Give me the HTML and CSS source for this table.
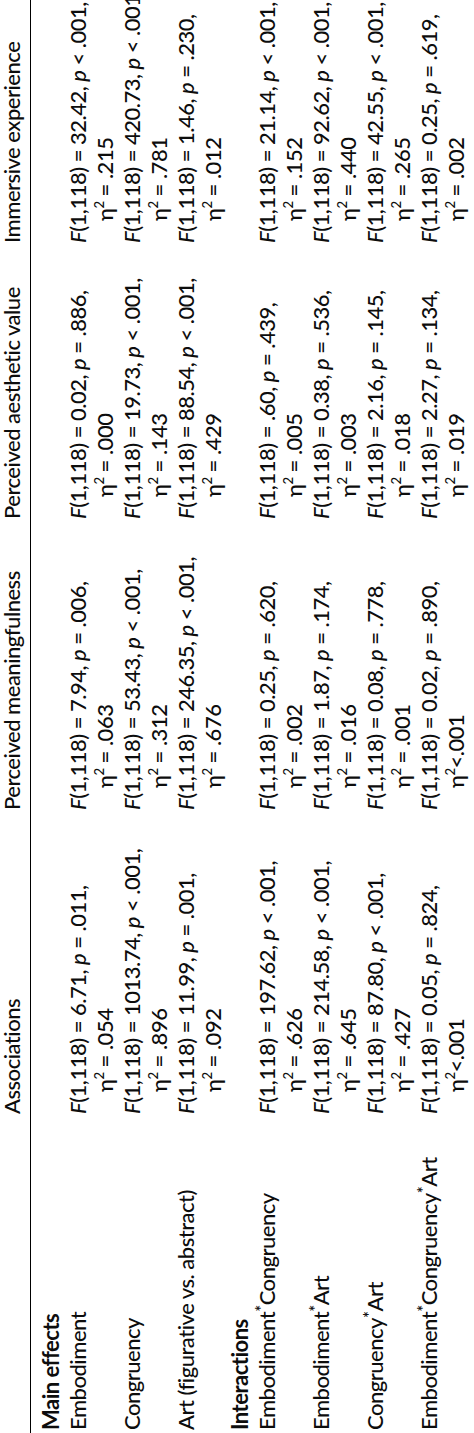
FILE: index.html
```html
<!DOCTYPE html>
<html lang="en">
<head>
<meta charset="utf-8">
<title>Table</title>
<link rel="stylesheet" href="styles.css">
</head>
<body>
<div class="page">
  <div class="table">
    <div class="th"></div>
    <div class="th">Associations</div>
    <div class="th">Perceived meaningfulness</div>
    <div class="th">Perceived aesthetic value</div>
    <div class="th">Immersive experience</div>

    <div class="section">Main effects</div>

    <div class="label">Embodiment</div>
    <div class="cell"><span class="l1"><i>F</i>(1,118) = 6.71, <i>p</i> = .011,</span><span class="l2">η<sup>2</sup> = .054</span></div>
    <div class="cell"><span class="l1"><i>F</i>(1,118) = 7.94, <i>p</i> = .006,</span><span class="l2">η<sup>2</sup> = .063</span></div>
    <div class="cell"><span class="l1"><i>F</i>(1,118) = 0.02, <i>p</i> = .886,</span><span class="l2">η<sup>2</sup> = .000</span></div>
    <div class="cell"><span class="l1"><i>F</i>(1,118) = 32.42, <i>p</i> &lt; .001,</span><span class="l2">η<sup>2</sup> = .215</span></div>

    <div class="label">Congruency</div>
    <div class="cell"><span class="l1"><i>F</i>(1,118) = 1013.74, <i>p</i> &lt; .001,</span><span class="l2">η<sup>2</sup> = .896</span></div>
    <div class="cell"><span class="l1"><i>F</i>(1,118) = 53.43, <i>p</i> &lt; .001,</span><span class="l2">η<sup>2</sup> = .312</span></div>
    <div class="cell"><span class="l1"><i>F</i>(1,118) = 19.73, <i>p</i> &lt; .001,</span><span class="l2">η<sup>2</sup> = .143</span></div>
    <div class="cell"><span class="l1"><i>F</i>(1,118) = 420.73, <i>p</i> &lt; .001,</span><span class="l2">η<sup>2</sup> = .781</span></div>

    <div class="label">Art (figurative vs. abstract)</div>
    <div class="cell"><span class="l1"><i>F</i>(1,118) = 11.99, <i>p</i> = .001,</span><span class="l2">η<sup>2</sup> = .092</span></div>
    <div class="cell"><span class="l1"><i>F</i>(1,118) = 246.35, <i>p</i> &lt; .001,</span><span class="l2">η<sup>2</sup> = .676</span></div>
    <div class="cell"><span class="l1"><i>F</i>(1,118) = 88.54, <i>p</i> &lt; .001,</span><span class="l2">η<sup>2</sup> = .429</span></div>
    <div class="cell"><span class="l1"><i>F</i>(1,118) = 1.46, <i>p</i> = .230,</span><span class="l2">η<sup>2</sup> = .012</span></div>

    <div class="section">Interactions</div>

    <div class="label">Embodiment<sup class="ast">*</sup>Congruency</div>
    <div class="cell"><span class="l1"><i>F</i>(1,118) = 197.62, <i>p</i> &lt; .001,</span><span class="l2">η<sup>2</sup> = .626</span></div>
    <div class="cell"><span class="l1"><i>F</i>(1,118) = 0.25, <i>p</i> = .620,</span><span class="l2">η<sup>2</sup> = .002</span></div>
    <div class="cell"><span class="l1"><i>F</i>(1,118) = .60, <i>p</i> = .439,</span><span class="l2">η<sup>2</sup> = .005</span></div>
    <div class="cell"><span class="l1"><i>F</i>(1,118) = 21.14, <i>p</i> &lt; .001,</span><span class="l2">η<sup>2</sup> = .152</span></div>

    <div class="label">Embodiment<sup class="ast">*</sup>Art</div>
    <div class="cell"><span class="l1"><i>F</i>(1,118) = 214.58, <i>p</i> &lt; .001,</span><span class="l2">η<sup>2</sup> = .645</span></div>
    <div class="cell"><span class="l1"><i>F</i>(1,118) = 1.87, <i>p</i> = .174,</span><span class="l2">η<sup>2</sup> = .016</span></div>
    <div class="cell"><span class="l1"><i>F</i>(1,118) = 0.38, <i>p</i> = .536,</span><span class="l2">η<sup>2</sup> = .003</span></div>
    <div class="cell"><span class="l1"><i>F</i>(1,118) = 92.62, <i>p</i> &lt; .001,</span><span class="l2">η<sup>2</sup> = .440</span></div>

    <div class="label">Congruency<sup class="ast">*</sup>Art</div>
    <div class="cell"><span class="l1"><i>F</i>(1,118) = 87.80, <i>p</i> &lt; .001,</span><span class="l2">η<sup>2</sup> = .427</span></div>
    <div class="cell"><span class="l1"><i>F</i>(1,118) = 0.08, <i>p</i> = .778,</span><span class="l2">η<sup>2</sup> = .001</span></div>
    <div class="cell"><span class="l1"><i>F</i>(1,118) = 2.16, <i>p</i> = .145,</span><span class="l2">η<sup>2</sup> = .018</span></div>
    <div class="cell"><span class="l1"><i>F</i>(1,118) = 42.55, <i>p</i> &lt; .001,</span><span class="l2">η<sup>2</sup> = .265</span></div>

    <div class="label">Embodiment<sup class="ast">*</sup>Congruency<sup class="ast">*</sup>Art</div>
    <div class="cell"><span class="l1"><i>F</i>(1,118) = 0.05, <i>p</i> = .824,</span><span class="l2">η<sup>2</sup>&lt;.001</span></div>
    <div class="cell"><span class="l1"><i>F</i>(1,118) = 0.02, <i>p</i> = .890,</span><span class="l2">η<sup>2</sup>&lt;.001</span></div>
    <div class="cell"><span class="l1"><i>F</i>(1,118) = 2.27, <i>p</i> = .134,</span><span class="l2">η<sup>2</sup> = .019</span></div>
    <div class="cell"><span class="l1"><i>F</i>(1,118) = 0.25, <i>p</i> = .619,</span><span class="l2">η<sup>2</sup> = .002</span></div>
  </div>
</div>
</body>
</html>
```

FILE: styles.css
```css
html, body {
  margin: 0;
  padding: 0;
  width: 474px;
  height: 1433px;
  overflow: hidden;
  background: #ffffff;
}

.page {
  width: 1433px;
  height: 474px;
  transform-origin: 0 0;
  transform: translateY(1433px) rotate(-90deg);
  font-family: Lato, "Noto Sans", sans-serif;
  font-size: 22px;
  font-weight: 500;
  letter-spacing: -0.5px;
  color: #0d0d0d;
}

.table {
  display: grid;
  grid-template-columns: 319px 304px 291px 276px 280px;
  width: 1470px;
}

.th {
  line-height: 24px;
  height: 30px;
  border-bottom: 1.5px solid #000000;
  margin-bottom: 6px;
  white-space: nowrap;
}

.th:first-child {
  padding-left: 3px;
}

.section {
  grid-column: 1 / -1;
  font-weight: 700;
  line-height: 27px;
  padding-left: 3px;
}

.label {
  line-height: 27px;
  padding-left: 3px;
  white-space: nowrap;
}

.cell {
  line-height: 27px;
  white-space: nowrap;
  display: flex;
  flex-direction: column;
}

.l2 {
  padding-left: 22px;
}

sup {
  font-size: 0.6em;
  line-height: 0;
  vertical-align: 0.7em;
}

sup.ast {
  font-size: 0.75em;
  vertical-align: 0.45em;
}
```
